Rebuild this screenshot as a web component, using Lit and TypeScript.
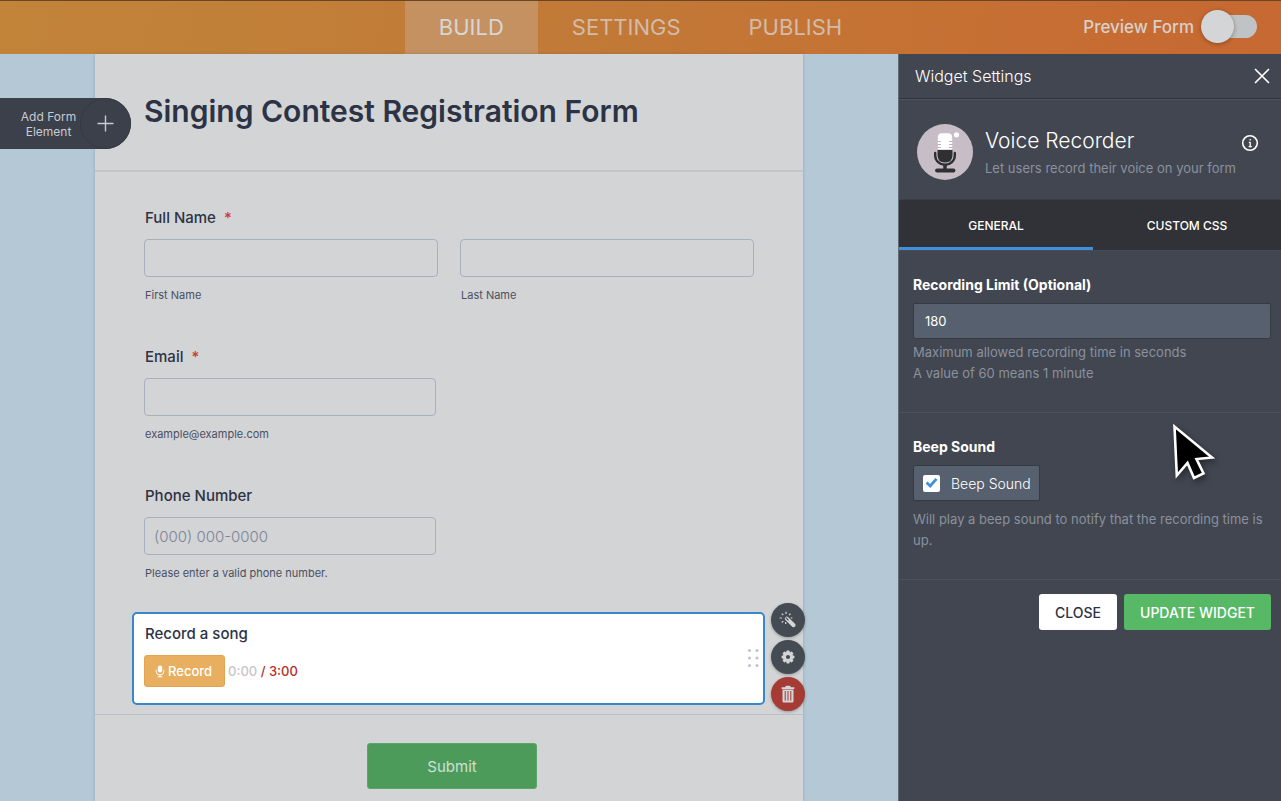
import { LitElement, html, css, svg } from "lit";
import { customElement, state } from "lit/decorators.js";
import { classMap } from "lit/directives/class-map.js";

const micShape = svg`
  <rect x="4" y="0" width="6" height="10" rx="3" />
  <path d="M1.6 6v2a5.4 5.4 0 0 0 10.8 0V6" fill="none" stroke="currentColor" stroke-width="1.3" />
  <path d="M6.3 12.5h1.4V15h2.6v1.4H3.7V15h2.6z" />`;

@customElement("builder-header")
class BuilderHeader extends LitElement {
  static styles = css`
    :host { display: block; }
    .bar {
      display: grid;
      grid-template-columns: 1fr auto 1fr;
      height: 54px;
      box-sizing: border-box;
      border-top: 1px solid #6b4527;
      background: linear-gradient(100deg, #c18439 0%, #c17a37 45%, #c67034 75%, #c66832 100%);
    }
    .tabs { grid-column: 2; display: flex; }
    .tab {
      display: flex;
      align-items: center;
      padding: 0 34px 2px;
      font-size: 22px;
      line-height: 28px;
      color: #d3bba8;
      text-decoration: none;
    }
    .active { background: #c59160; color: #d6d6d7; }
    .preview {
      justify-self: end;
      display: flex;
      align-items: center;
      gap: 7px;
      padding: 0 24px 2px 0;
      font-size: 17px;
      font-weight: 500;
      color: #d8d0cb;
    }
    .toggle {
      appearance: none;
      position: relative;
      display: flex;
      align-items: center;
      width: 56px;
      height: 33px;
      margin: 0;
    }
    .toggle::before {
      content: "";
      position: absolute;
      inset: 5px 0 5px 8px;
      border-radius: 12px;
      background: #bfc3c5;
    }
    .toggle::after {
      content: "";
      position: relative;
      width: 33px;
      height: 33px;
      border-radius: 50%;
      background: #d4d5d7;
      box-shadow: 0 1px 4px rgba(60, 40, 20, 0.45);
    }
    .toggle:checked { justify-content: flex-end; }
  `;
  render() {
    return html`
      <header class="bar">
        <nav class="tabs">
          <a class="tab active" href="#build">BUILD</a>
          <a class="tab" href="#settings">SETTINGS</a>
          <a class="tab" href="#publish">PUBLISH</a>
        </nav>
        <label class="preview">Preview Form <input class="toggle" type="checkbox" role="switch" /></label>
      </header>`;
  }
}

@customElement("form-canvas")
class FormCanvas extends LitElement {
  static styles = css`
    :host { display: block; position: relative; background: #b4c8d6; }
    .page {
      box-sizing: border-box;
      max-width: 708px;
      min-height: 100%;
      margin: 0 auto;
      background: #d3d4d6;
      box-shadow: 0 0 3px rgba(80, 100, 120, 0.35);
      color: #2c3345;
    }
    .head { padding: 37px 49px 39px; border-bottom: 2px solid #c2c4cb; }
    .title { margin: 0; font-size: 30px; line-height: 40px; font-weight: 600; }
    .fields { padding: 36px 49px 9px; border-bottom: 1px solid #bcbdca; }
    .field { margin-bottom: 44px; }
    .field.last { margin-bottom: 31px; }
    .label {
      display: block;
      padding-left: 1px;
      font-size: 15px;
      line-height: 20px;
      font-weight: 500;
      margin-bottom: 11px;
    }
    .req { color: #c93a34; margin-left: 4px; }
    .pair { display: grid; grid-template-columns: 1fr 1fr; gap: 22px; }
    .single { max-width: 292px; }
    .box {
      box-sizing: border-box;
      display: block;
      width: 100%;
      height: 38px;
      padding: 0 9px;
      border: 1px solid #a9afbf;
      border-radius: 4px;
      background: transparent;
      font: 300 15px "Inter", sans-serif;
      color: #2c3345;
    }
    .box::placeholder { color: #7d8496; opacity: 1; }
    .sub {
      display: block;
      margin-top: 10px;
      padding-left: 1px;
      font-size: 11px;
      line-height: 16px;
      color: #4a5063;
    }
    .widget {
      position: relative;
      margin: 0 -11px 0 -12px;
      padding: 10px 10px 16px;
      border: 2px solid #3a86cb;
      border-radius: 5px;
      background: #fff;
    }
    .recorder { display: flex; align-items: center; gap: 3px; font-size: 13px; font-weight: 500; }
    .record {
      display: flex;
      align-items: center;
      gap: 3px;
      height: 32px;
      padding: 0 12px 0 10px;
      border: 1px solid #e3a44d;
      border-radius: 3px;
      background: #e8af60;
      color: #fff;
      font: 500 13px "Inter", sans-serif;
    }
    .mic { width: 10px; height: 13px; fill: currentColor; }
    .time { color: #c6c6c8; }
    .limit { color: #bb2c26; }
    .grip {
      position: absolute;
      right: 4px;
      top: 34px;
      width: 12px;
      height: 20px;
      fill: #c0c3d4;
    }
    .tools {
      position: absolute;
      left: calc(100% + 8px);
      top: -11px;
      display: flex;
      flex-direction: column;
      gap: 3px;
    }
    .tool {
      display: flex;
      align-items: center;
      justify-content: center;
      width: 34px;
      height: 34px;
      padding: 0;
      border: 0;
      border-radius: 50%;
      background: #444b53;
      color: #d4d5d7;
      box-shadow: 0 1px 3px rgba(0, 0, 0, 0.3);
    }
    .danger { background: #a63a34; }
    .glyph { width: 18px; height: 18px; fill: currentColor; }
    .foot { display: flex; justify-content: center; padding: 28px 0 12px 6px; }
    .submit {
      width: 170px;
      height: 46px;
      border: 1px solid #5ba76b;
      border-radius: 3px;
      background: #4c9b5b;
      color: #cfe0d3;
      font: 400 15px "Inter", sans-serif;
    }
    .add {
      position: absolute;
      left: 0;
      top: 44px;
      display: flex;
      align-items: center;
      height: 51px;
      padding: 0 0 0 17px;
      border: 0;
      border-radius: 0 26px 26px 0;
      background: #3b404b;
      color: #c9cbd0;
      font: 400 12px/15px "Inter", sans-serif;
    }
    .addtext { width: 63px; }
    .plus {
      box-sizing: border-box;
      width: 51px;
      height: 51px;
      border: 1px solid #333842;
      border-radius: 50%;
      stroke: #c9cbd0;
    }
  `;
  render() {
    return html`
      <main class="page">
        <header class="head"><h1 class="title">Singing Contest Registration Form</h1></header>
        <section class="fields">
          <div class="field" role="group" aria-labelledby="name">
            <span class="label" id="name">Full Name <span class="req">*</span></span>
            <div class="pair">
              <div><input class="box" id="first" /><label class="sub" for="first">First Name</label></div>
              <div><input class="box" id="last" /><label class="sub" for="last">Last Name</label></div>
            </div>
          </div>
          <div class="field">
            <label class="label" for="email">Email <span class="req">*</span></label>
            <div class="single"><input class="box" id="email" type="email" /></div>
            <span class="sub">example@example.com</span>
          </div>
          <div class="field last">
            <label class="label" for="phone">Phone Number</label>
            <div class="single"><input class="box" id="phone" type="tel" placeholder="(000) 000-0000" /></div>
            <span class="sub">Please enter a valid phone number.</span>
          </div>
          <div class="widget">
            <span class="label">Record a song</span>
            <div class="recorder">
              <button class="record">
                <svg class="mic" viewBox="0 0 14 17">${micShape}</svg>Record
              </button>
              <span><span class="time">0:00</span> <span class="limit">/ 3:00</span></span>
            </div>
            <svg class="grip" viewBox="0 0 12 20">
              ${[2.5, 10].map((x) => [2.5, 10, 17.5].map((y) => svg`<circle cx=${x} cy=${y} r="1.6" />`))}
            </svg>
            <div class="tools">
              <button class="tool" aria-label="Wizard">
                <svg class="glyph" viewBox="0 0 18 18">
                  <path d="M7.8 7.6L14.6 14.2" stroke="currentColor" stroke-width="4" stroke-linecap="round" />
                  <path d="M7 6.800L9.200 9" stroke="#444b53" stroke-width="1.1" stroke-linecap="round" />
                  <path d="M7 .8v2.200M2.800 2.600l1.500 1.500M.6 7h2.200M2.800 11.500l1.500-1.400M11.500 2.600L10 4.100M6.700 11v2M11.600 7h1.800" stroke="currentColor" stroke-width="1.2" />
                </svg>
              </button>
              <button class="tool" aria-label="Properties">
                <svg class="glyph" viewBox="0 0 18 18">
                  <path fill-rule="evenodd" d="M9 3.9a5.1 5.1 0 1 0 0 10.2A5.1 5.1 0 0 0 9 3.9zm0 3a2.1 2.1 0 1 1 0 4.2 2.1 2.1 0 0 1 0-4.2z" />
                  ${[0, 45, 90, 135, 180, 225, 270, 315].map(
                    (a) => svg`<rect x="7.4" y="2.6" width="3.2" height="3" rx=".7" transform="rotate(${a} 9 9)" />`
                  )}
                </svg>
              </button>
              <button class="tool danger" aria-label="Delete">
                <svg class="glyph" viewBox="0 0 18 18">
                  <path d="M2.6 2.200h3.600Q6.400.8 7.400.8h3.200q1 0 1.200 1.400h3.600v1.700H2.600zM3.500 4.600h11v12q0 .8-.8.8H4.300q-.8 0-.8-.8z" />
                  <path d="M6.200 6v9.600M9 6v9.600M11.800 6v9.600" stroke="#a63a34" stroke-width="1" />
                </svg>
              </button>
            </div>
          </div>
        </section>
        <footer class="foot"><button class="submit">Submit</button></footer>
      </main>
      <button class="add">
        <span class="addtext">Add Form Element</span>
        <svg class="plus" viewBox="0 0 49 49"><path d="M16.5 24.5h16M24.5 16.5v16" stroke-width="1.4" /></svg>
      </button>`;
  }
}

@customElement("widget-settings")
class WidgetSettings extends LitElement {
  static styles = css`
    :host { display: block; box-sizing: border-box; background: #414650; color: #fff; border-left: 1px solid #616a76; }
    .top {
      display: flex;
      align-items: center;
      justify-content: space-between;
      height: 44px;
      padding: 0 11px 0 16px;
      border-bottom: 1px solid #2f343c;
    }
    .heading { margin: 0; font-size: 16px; font-weight: 300; }
    .icon { display: flex; padding: 0; border: 0; background: none; color: #fff; }
    .x { width: 16px; height: 16px; stroke: currentColor; }
    .widget {
      display: flex;
      align-items: center;
      gap: 12px;
      height: 99px;
      padding: 0 22px 0 18px;
      border-top: 1px solid #4c5362;
      border-bottom: 1px solid #393e47;
    }
    .logo { width: 56px; height: 56px; margin-top: 5px; }
    .about { flex: 1; padding-top: 5px; white-space: nowrap; }
    .name { margin: 0; font-size: 21px; line-height: 28px; font-weight: 300; }
    .desc { margin: 3px 0 0; font-size: 13px; line-height: 20px; color: #8b919e; }
    .info { width: 18px; height: 18px; margin-top: 4px; fill: none; stroke: currentColor; }
    .row { display: flex; align-items: center; justify-content: space-between; height: 28px; }
    .tabs { display: grid; grid-template-columns: 194px 1fr; background: #303238; border-bottom: 1px solid #474c57; }
    .tab {
      height: 50px;
      padding: 3px 0 0;
      border: 0;
      border-bottom: 3px solid transparent;
      background: none;
      color: #fff;
      font: 500 12px "Inter", sans-serif;
    }
    .current { border-bottom-color: #4090dc; }
    .block { padding: 24px 10px 28px 14px; border-bottom: 1px solid #4b515d; }
    .label { display: block; margin-bottom: 8px; font-size: 14px; line-height: 20px; font-weight: 700; }
    .value {
      box-sizing: border-box;
      width: 100%;
      height: 36px;
      display: block;
      padding: 0 11px;
      border: 1px solid #353a43;
      border-radius: 2px;
      background: #57606e;
      color: #fff;
      font: 400 13px "Inter", sans-serif;
    }
    .help { margin: 3px 0 0; font-size: 13px; line-height: 21px; color: #8b919e; }
    .help.wide { margin-top: 8px; }
    .choice {
      display: inline-flex;
      align-items: center;
      gap: 11px;
      height: 34px;
      padding: 0 8px 0 9px;
      border: 1px solid #353a43;
      border-radius: 2px;
      background: #57606e;
      font-size: 14px;
      font-weight: 300;
      vertical-align: top;
    }
    .check {
      appearance: none;
      width: 17px;
      height: 17px;
      margin: 0;
      border-radius: 2px;
      background: #fff;
      display: grid;
      place-items: center;
    }
    .check:checked::before {
      content: "";
      width: 12px;
      height: 10px;
      background: #4090dc;
      clip-path: polygon(0 55%, 17% 35%, 38% 60%, 83% 0, 100% 18%, 40% 100%);
    }
    .actions { display: flex; justify-content: flex-end; gap: 7px; padding: 14px 10px; }
    .btn {
      height: 36px;
      padding: 0 16px;
      border: 0;
      border-radius: 3px;
      background: #fff;
      color: #2c3345;
      font: 500 14px "Inter", sans-serif;
    }
    .go { background: #57b965; color: #fff; }
  `;
  @state() private tab = "GENERAL";
  render() {
    return html`
      <div class="top">
        <h2 class="heading">Widget Settings</h2>
        <button class="icon" aria-label="Close settings">
          <svg class="x" viewBox="0 0 16 16"><path d="M1.5 1.500l13 13M14.5 1.500l-13 13" stroke-width="1.7" stroke-linecap="round" /></svg>
        </button>
      </div>
      <div class="widget">
        <svg class="logo" viewBox="0 0 56 56">
          <circle cx="28" cy="28" r="28" fill="#c7bdc7" />
          <path d="M20.800 25.500V13.500q0-4.200 4.200-4.200h6q4.200 0 4.200 4.200v12z" fill="#fff" />
          <path d="M20.500 17.500H24M20.500 20.500H24M20.500 23.500H24M32 17.500h3.500M32 20.500h3.500M32 23.500h3.500" stroke="#aaa3ad" stroke-width=".8" />
          <circle cx="39.500" cy="10.800" r="2.600" fill="#fff" />
          <path d="M20.500 26h15v5q0 7.500-7.500 7.500t-7.500-7.500z" fill="#2f3033" />
          <path d="M18.200 29v2.500a9.800 9.300 0 0 0 19.600 0V29" fill="none" stroke="#2f3033" stroke-width="2.400" stroke-linecap="round" />
          <path d="M28 40v6" stroke="#2f3033" stroke-width="3.500" />
          <path d="M20 46.500h16.500" stroke="#2f3033" stroke-width="3.800" stroke-linecap="round" />
        </svg>
        <div class="about">
          <div class="row">
            <h3 class="name">Voice Recorder</h3>
            <button class="icon" aria-label="About this widget">
              <svg class="info" viewBox="0 0 18 18">
                <circle cx="9" cy="9" r="7.300" stroke-width="1.600" />
                <path d="M9.200 8v5M9.200 5v1.500M7.800 8.300h1.400M7.600 12.700h3.200" stroke-width="1.300" />
              </svg>
            </button>
          </div>
          <p class="desc">Let users record their voice on your form</p>
        </div>
      </div>
      <div class="tabs" role="tablist">
        ${["GENERAL", "CUSTOM CSS"].map(
          (t) => html`<button
            role="tab"
            class=${classMap({ tab: true, current: t === this.tab })}
            @click=${() => (this.tab = t)}
          >${t}</button>`
        )}
      </div>
      <section class="block">
        <label class="label" for="limit">Recording Limit (Optional)</label>
        <input class="value" id="limit" type="text" value="180" />
        <p class="help">Maximum allowed recording time in seconds<br />A value of 60 means 1 minute</p>
      </section>
      <section class="block">
        <span class="label">Beep Sound</span>
        <label class="choice"><input class="check" type="checkbox" checked />Beep Sound</label>
        <p class="help wide">Will play a beep sound to notify that the recording time is up.</p>
      </section>
      <div class="actions">
        <button class="btn">CLOSE</button>
        <button class="btn go">UPDATE WIDGET</button>
      </div>`;
  }
}

@customElement("app-root")
class AppRoot extends LitElement {
  static styles = css`
    :host {
      display: grid;
      grid-template-rows: auto 1fr;
      position: relative;
      min-height: 100vh;
      font-family: "Inter", sans-serif;
    }
    .work { display: grid; grid-template-columns: 1fr 383px; }
    .pointer {
      position: absolute;
      left: 1170px;
      top: 422px;
      width: 46px;
      height: 60px;
      pointer-events: none;
      filter: drop-shadow(2px 3px 3px rgba(0, 0, 0, 0.4));
    }
  `;
  render() {
    return html`
      <builder-header></builder-header>
      <div class="work">
        <form-canvas></form-canvas>
        <widget-settings></widget-settings>
      </div>
      <svg class="pointer" viewBox="0 0 46 60">
        <path d="M4.500 4.500L6.800 53.500L17.500 41L24 56L33.500 51.500L26.500 37L42 35.500z" fill="#000" stroke="#fff" stroke-width="2.600" />
      </svg>`;
  }
}
